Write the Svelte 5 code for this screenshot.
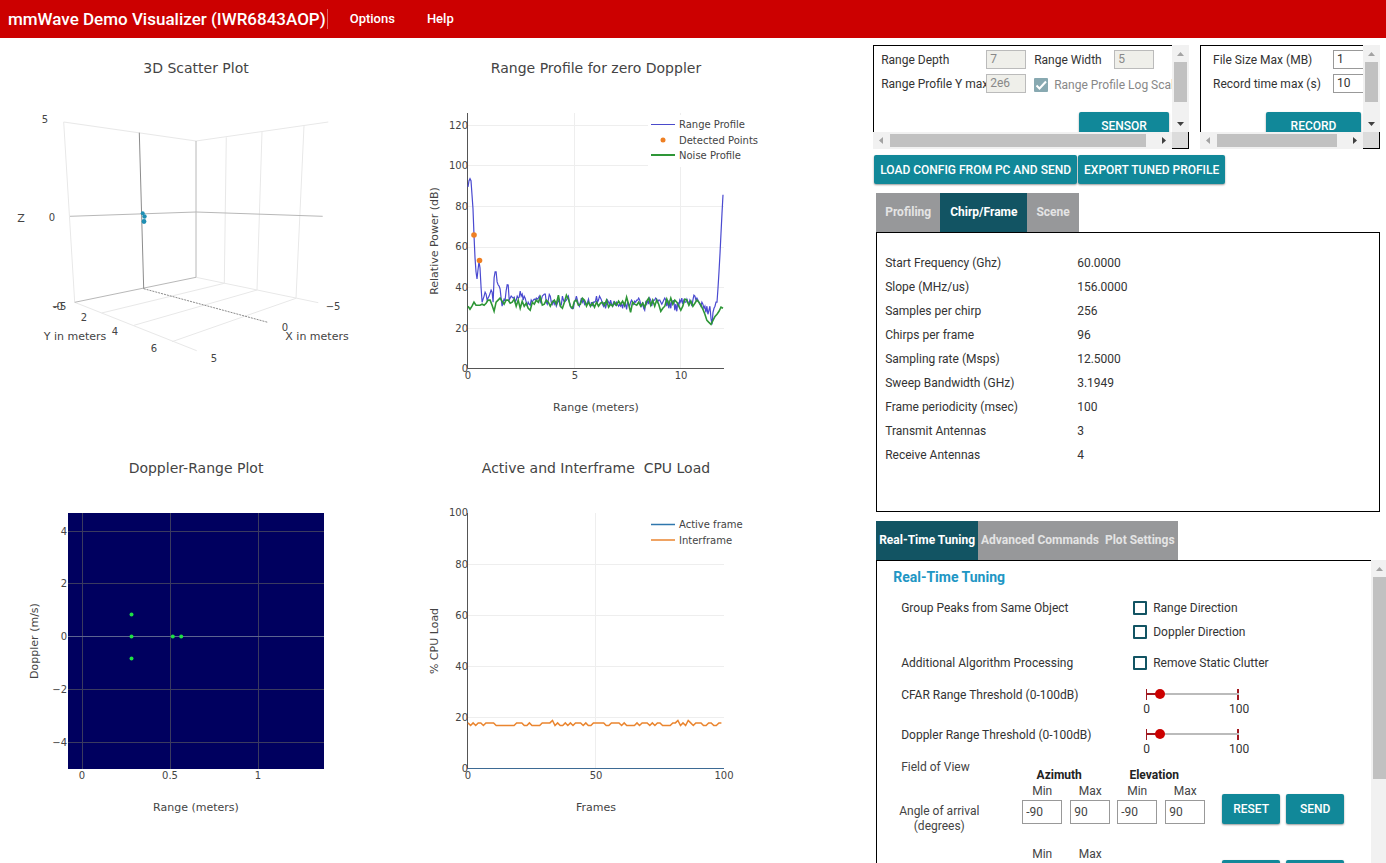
<script>
  const rangeProfile = [
    90, 93, 94, 93, 86, 79, 66, 55, 48, 44.5, 49, 53, 50, 40, 33, 34.5, 36, 38, 37, 34, 35, 36, 37.5, 39, 38, 33, 45, 48, 48, 43, 41.6, 41, 39.5, 35, 31,
    33, 34.5, 34, 38.5, 41.6, 41.5, 34, 35, 36, 35.5, 35, 35.5, 33, 34, 36, 35, 35.5, 38.5, 36, 37, 34, 36, 35, 33, 31, 33, 32, 31.5, 34, 33, 34,
    34.5, 34, 35, 34.5, 35, 36, 33, 34, 36, 36.5, 37, 37, 33, 32, 34, 36.8, 36, 33, 32, 34, 32, 33, 31, 32.5, 34, 33, 31, 32, 36, 34, 33, 33.5, 34, 35,
    36, 33, 31, 30, 30.5, 30, 33, 34, 36, 34, 32, 31, 33, 35, 33, 34, 32, 33, 31.5, 33, 34.5, 32, 31, 33, 31, 33, 33, 33.5, 36, 33, 34, 36, 35, 34,
    32, 31, 33, 30, 32, 34, 33, 32, 34, 32, 31, 33, 32, 31.5, 33, 32, 31, 32, 31, 32, 30, 33, 31, 32, 29.5, 33, 32, 31, 33, 34, 33, 32, 33.5, 33, 34,
    34, 35, 34, 32, 31, 33, 30, 29, 33, 32, 34, 32, 35, 34, 31, 33, 34, 34, 35, 34.5, 33, 34, 34, 33, 32, 33, 34, 35, 34, 31, 34, 30, 33, 30, 34, 32,
    34, 29, 32, 28.5, 33, 31, 34, 33, 35, 32, 34, 33, 33, 34.5, 33, 32, 34, 33, 31, 34, 36.5, 36, 34, 35, 34, 33, 32, 31, 33, 32, 30, 31, 28, 31,
    27, 29, 31, 25, 22, 28, 30, 31, 33, 33, 40, 48, 57, 67, 77, 86
  ];
  const noiseProfile = [
    31, 29.5, 31, 33, 31.5, 31.5, 31.5, 32, 31.5, 32.5, 34, 34, 31.5, 28.5, 33, 34, 35, 33.5, 32, 34, 34, 32.5, 33, 34.5, 31, 34, 30, 33.5, 31, 32.5,
    30, 29, 33, 32, 34, 33, 35.5, 31.5, 32, 34, 33, 31, 33, 34, 32, 36.5, 31, 30, 33, 36.5, 34.5, 31, 30, 33.5, 34, 31.5, 32, 35, 34, 31, 33, 31, 32.5,
    30.5, 33, 31, 32.5, 33, 31.5, 34, 30.5, 32, 31, 33, 31.5, 33.5, 32, 33.5, 31.5, 35.5, 32, 28, 33, 32, 31.5, 33, 31, 32.5, 30.5, 33.5, 35, 31.5,
    34, 31, 34, 32, 28.5, 30, 31, 34.5, 32, 35, 32, 34, 33, 31, 29, 31, 34.5, 34, 31.5, 33.5, 31, 32.5, 34, 33, 31.5, 29.5, 27, 24, 23, 22, 24, 26,
    27, 28.5, 30.5, 30
  ];
  const interframe = (
    '8787887888877777777888778777788889787787878887877888887788887877778788878788777788978798788877887788'
  ).split('').map((d) => 10 + Number(d));

  const left = 68;
  const base = 331;
  const trace = (values, dx, dy) =>
    values.map((v, i) => `${(left + i * dx).toFixed(1)},${(base - v * dy).toFixed(1)}`).join(' ');
  const bluePoints = trace(rangeProfile, 255 / (rangeProfile.length - 1), 2.025);
  const greenPoints = trace(noiseProfile, 255 / (noiseProfile.length - 1), 2.025);
  const cpuPoints = trace(interframe, 2.56, 2.56);

  const chirp = [
    ['Start Frequency (Ghz)', '60.0000'],
    ['Slope (MHz/us)', '156.0000'],
    ['Samples per chirp', '256'],
    ['Chirps per frame', '96'],
    ['Sampling rate (Msps)', '12.5000'],
    ['Sweep Bandwidth (GHz)', '3.1949'],
    ['Frame periodicity (msec)', '100'],
    ['Transmit Antennas', '3'],
    ['Receive Antennas', '4']
  ];
  const sliders = [
    { id: 'cfar', label: 'CFAR Range Threshold (0-100dB)', value: 15 },
    { id: 'doppler', label: 'Doppler Range Threshold (0-100dB)', value: 15 }
  ];
</script>

{#snippet arrow(points, strong)}
  <svg class="arrow" class:strong viewBox="0 0 17 17" aria-hidden="true"><polygon {points} /></svg>
{/snippet}

{#snippet vbar()}
  <div class="vbar">
    {@render arrow('5,11 12,11 8.5,7', false)}
    <div class="track"><div class="thumb"></div></div>
    {@render arrow('5,7 12,7 8.5,11', true)}
  </div>
{/snippet}

{#snippet hbar()}
  <div class="hbar">
    {@render arrow('10,5 10,12 6,8.5', false)}
    <div class="track"><div class="thumb"></div></div>
    {@render arrow('7,5 7,12 11,8.5', true)}
  </div>
  <div class="corner"></div>
{/snippet}

{#snippet angles(name)}
  <div class="pair">
    <strong>{name}</strong>
    <label for="{name}-min">Min</label>
    <label for="{name}-max">Max</label>
    <input id="{name}-min" value="-90" />
    <input id="{name}-max" value="90" />
  </div>
{/snippet}

<div class="page">
  <header>
    <h1>mmWave Demo Visualizer (IWR6843AOP)</h1>
    <nav>
      <button>Options</button>
      <button>Help</button>
    </nav>
  </header>

  <main>
    <section class="plots">
      <svg viewBox="0 0 400 400" role="img" aria-label="3D Scatter Plot">
        <text class="title" x="196" y="35">3D Scatter Plot</text>
        <g class="cube">
          <path d="M63.7 84 196 103 328.3 84M63.7 84 74.7 264.3M226.3 99.3 224.3 245.3M262 94 257 252M304 87.7 296 260.3M196 239.3 318.3 264.7M224.3 245.3 101.7 275M257 252 134 287.3M296 260.3 172 303.7M74.7 264.3 196.7 312.7" />
          <path class="mid" d="M70 178.3 196 174 322.7 178.3M196 103V239.3L74.7 264.3" />
          <path class="dark" d="M139.3 94.7 143.7 250.7" />
          <path class="dark dots" d="M143.7 250.7 267.7 284.3" />
        </g>
        <g fill="#1f8fb3">
          <circle cx="142.7" cy="175.3" r="2" />
          <circle cx="144.5" cy="178.5" r="2.2" />
          <circle cx="144" cy="183.5" r="2.4" />
        </g>
        <g class="tick">
          <text x="45" y="85">5</text>
          <text x="52" y="183">0</text>
          <text x="58" y="272">-0</text>
          <text x="59" y="272">−5</text>
          <text x="84" y="283">2</text>
          <text x="115" y="297">4</text>
          <text x="154" y="314">6</text>
          <text x="214" y="324">5</text>
          <text x="285" y="293">0</text>
          <text x="333" y="272">−5</text>
        </g>
        <g class="axis">
          <text x="21" y="184">Z</text>
          <text x="75" y="302">Y in meters</text>
          <text x="317" y="302">X in meters</text>
        </g>
      </svg>

      <svg viewBox="0 0 400 400" role="img" aria-label="Range Profile for zero Doppler">
        <text class="title" x="196" y="35">Range Profile for zero Doppler</text>
        <path class="grid" d="M174.5 75V331M280.5 75V331M68 290.5H324M68 249.5H324M68 209.5H324M68 168.5H324M68 127.5H324M68 87.5H324" />
        <rect x="248" y="77" width="112" height="52" fill="#fff" />
        <path class="frame" d="M67.5 75V330.5H324" />
        <polyline points={bluePoints} stroke="#4a4ad0" stroke-width="1.2" />
        <polyline points={greenPoints} stroke="#2e9637" stroke-width="1.6" />
        <circle cx="74" cy="197" r="2.8" fill="#ee7f23" />
        <circle cx="79.5" cy="222.5" r="2.8" fill="#ee7f23" />
        <path d="M251 86.5H275" stroke="#4a4acb" />
        <circle cx="263" cy="102" r="2.5" fill="#ee7f23" />
        <path d="M251 117H275" stroke="#2e9637" stroke-width="2" />
        <g class="legend">
          <text x="279" y="90">Range Profile</text>
          <text x="279" y="106">Detected Points</text>
          <text x="279" y="121">Noise Profile</text>
        </g>
        <g class="tick end">
          <text x="68" y="91">120</text>
          <text x="68" y="131">100</text>
          <text x="68" y="172">80</text>
          <text x="68" y="212">60</text>
          <text x="68" y="253">40</text>
          <text x="68" y="294">20</text>
          <text x="68" y="334">0</text>
        </g>
        <g class="tick">
          <text x="68" y="341">0</text>
          <text x="175" y="341">5</text>
          <text x="281" y="341">10</text>
        </g>
        <g class="axis">
          <text x="196" y="373">Range (meters)</text>
          <text transform="translate(38 203) rotate(-90)">Relative Power (dB)</text>
        </g>
      </svg>

      <svg viewBox="0 0 400 400" role="img" aria-label="Doppler-Range Plot">
        <text class="title" x="196" y="35">Doppler-Range Plot</text>
        <rect x="68" y="75" width="256" height="256" fill="#00005f" />
        <path d="M82.5 75V331M170.5 75V331M258.5 75V331M68 93.5H324M68 145.5H324M68 251.5H324M68 304.5H324" stroke="#3a3a5f" />
        <path d="M68 198.5H324" stroke="#5c6490" />
        <g fill="#1fe044">
          <circle cx="131.5" cy="176.5" r="2" />
          <circle cx="131.5" cy="198.5" r="2" />
          <circle cx="131.5" cy="220.5" r="2" />
          <circle cx="172.8" cy="198.5" r="2" />
          <circle cx="181.2" cy="198.5" r="2" />
        </g>
        <g class="tick end">
          <text x="67" y="97">4</text>
          <text x="67" y="149">2</text>
          <text x="67" y="202">0</text>
          <text x="67" y="255">−2</text>
          <text x="67" y="308">−4</text>
        </g>
        <g class="tick">
          <text x="82" y="341">0</text>
          <text x="170" y="341">0.5</text>
          <text x="258" y="341">1</text>
        </g>
        <g class="axis">
          <text x="196" y="373">Range (meters)</text>
          <text transform="translate(38 203) rotate(-90)">Doppler (m/s)</text>
        </g>
      </svg>

      <svg viewBox="0 0 400 400" role="img" aria-label="Active and Interframe CPU Load">
        <text class="title" x="196" y="35">Active and Interframe&nbsp; CPU Load</text>
        <path class="grid" d="M195.5 75V331M68 126.5H324M68 177.5H324M68 228.5H324M68 279.5H324" />
        <path class="frame" d="M67.5 75V330.5" />
        <path d="M67 330.5H324" stroke="#3d6a94" />
        <polyline points={cpuPoints} stroke="#ea852f" stroke-width="1.5" />
        <path d="M251 86.5H275" stroke="#2f77ad" stroke-width="1.5" />
        <path d="M251 102H275" stroke="#ea852f" stroke-width="1.5" />
        <g class="legend">
          <text x="279" y="90">Active frame</text>
          <text x="279" y="106">Interframe</text>
        </g>
        <g class="tick end">
          <text x="68" y="78">100</text>
          <text x="68" y="130">80</text>
          <text x="68" y="181">60</text>
          <text x="68" y="232">40</text>
          <text x="68" y="283">20</text>
          <text x="68" y="334">0</text>
        </g>
        <g class="tick">
          <text x="68" y="341">0</text>
          <text x="196" y="341">50</text>
          <text x="324" y="341">100</text>
        </g>
        <g class="axis">
          <text x="196" y="373">Frames</text>
          <text transform="translate(38 203) rotate(-90)">% CPU Load</text>
        </g>
      </svg>
    </section>

    <section class="side">
      <div class="boxes">
        <div class="scrollbox wide">
          <div class="view">
            <div class="fields">
              <label for="depth">Range Depth</label>
              <input id="depth" value="7" disabled />
              <label for="width">Range Width</label>
              <input id="width" value="5" disabled />
              <label for="ymax">Range Profile Y max</label>
              <input id="ymax" value="2e6" disabled />
              <label class="check off"><input type="checkbox" checked disabled />Range Profile Log Scale</label>
            </div>
            <button class="action">SENSOR</button>
          </div>
          {@render vbar()}
          {@render hbar()}
        </div>
        <div class="scrollbox narrow">
          <div class="view">
            <div class="fields">
              <label for="size">File Size Max (MB)</label>
              <input id="size" value="1" />
              <label for="time">Record time max (s)</label>
              <input id="time" value="10" />
            </div>
            <button class="action">RECORD</button>
          </div>
          {@render vbar()}
          {@render hbar()}
        </div>
      </div>

      <div class="buttons">
        <button class="action">LOAD CONFIG FROM PC AND SEND</button>
        <button class="action">EXPORT TUNED PROFILE</button>
      </div>

      <div class="tabs roomy" role="tablist">
        <button role="tab" aria-selected="false">Profiling</button>
        <button role="tab" aria-selected="true">Chirp/Frame</button>
        <button role="tab" aria-selected="false">Scene</button>
      </div>
      <div class="panel">
        <table>
          <tbody>
            {#each chirp as [name, value]}
              <tr><th scope="row">{name}</th><td>{value}</td></tr>
            {/each}
          </tbody>
        </table>
      </div>

      <div class="tabs" role="tablist">
        <button role="tab" aria-selected="true">Real-Time Tuning</button>
        <button role="tab" aria-selected="false">Advanced Commands</button>
        <button role="tab" aria-selected="false">Plot Settings</button>
      </div>
      <div class="tuning">
        <div class="form">
          <h2>Real-Time Tuning</h2>
          <div class="row">
            <span>Group Peaks from Same Object</span>
            <div>
              <label class="check"><input type="checkbox" />Range Direction</label>
              <label class="check"><input type="checkbox" />Doppler Direction</label>
            </div>
          </div>
          <div class="row">
            <span>Additional Algorithm Processing</span>
            <label class="check"><input type="checkbox" />Remove Static Clutter</label>
          </div>
          <div>
            {#each sliders as s}
              <div class="row slide">
                <label for={s.id}>{s.label}</label>
                <div class="slider">
                  <div class="rail"><input id={s.id} type="range" min="0" max="100" value={s.value} /></div>
                  <div class="ends"><span>0</span><span>100</span></div>
                </div>
              </div>
            {/each}
          </div>
          <div class="fov">
            <div class="names">
              <span>Field of View</span>
              <span class="angle">Angle of arrival<br />(degrees)</span>
            </div>
            {@render angles('Azimuth')}
            {@render angles('Elevation')}
            <div class="send"><button class="action">RESET</button><button class="action">SEND</button></div>
          </div>
          <div class="fov second">
            <div class="names"></div>
            <div class="pair">
              <label for="r-min">Min</label>
              <label for="r-max">Max</label>
              <input id="r-min" />
              <input id="r-max" />
            </div>
            <div class="pair"></div>
            <div class="send"><button class="action">RESET</button><button class="action">SEND</button></div>
          </div>
        </div>
        {@render vbar()}
      </div>
    </section>
  </main>
</div>

<style>
  :global(body) {
    margin: 0;
    background: #fff;
  }
  .page {
    display: flex;
    flex-direction: column;
    height: 100vh;
    overflow: hidden;
    color: #333;
    font: 12px/16px Roboto, sans-serif;
  }
  .page * {
    box-sizing: border-box;
  }
  button,
  input {
    font: inherit;
    color: inherit;
    margin: 0;
    border: 0;
    border-radius: 0;
  }
  header {
    display: flex;
    align-items: center;
    flex: none;
    height: 38px;
    padding-left: 8px;
    background: #c00;
    color: #fff;
  }
  h1 {
    margin: 0;
    padding-right: 1px;
    border-right: 1px solid #e06666;
    font-size: 17px;
    line-height: 20px;
    font-weight: 500;
    white-space: nowrap;
  }
  nav {
    display: flex;
    gap: 32px;
    padding-left: 22px;
  }
  nav button {
    padding: 0;
    background: none;
    font-size: 13px;
    font-weight: 500;
  }
  main {
    display: grid;
    grid-template-columns: 63fr 37fr;
    flex: 1;
    min-height: 0;
  }
  .plots {
    display: grid;
    grid-template-columns: repeat(2, 400px);
    align-content: start;
    min-width: 0;
  }
  .plots svg {
    display: block;
    width: 100%;
    fill: none;
    font-family: "DejaVu Sans", Verdana, sans-serif;
  }
  .plots text {
    fill: #444;
    text-anchor: middle;
  }
  .plots .title {
    font-size: 14px;
  }
  .plots .tick {
    font-size: 10px;
  }
  .plots .legend {
    font-size: 10px;
  }
  .plots .axis {
    font-size: 11px;
  }
  .plots .end text {
    text-anchor: end;
  }
  .plots .legend text {
    text-anchor: start;
  }
  .grid {
    stroke: #eee;
  }
  .frame {
    stroke: #555;
  }
  .cube path {
    stroke: #e8e8e8;
  }
  .cube .mid {
    stroke: #b8b8b8;
  }
  .cube .dark {
    stroke: #8c8c8c;
  }
  .cube .dots {
    stroke-dasharray: 2 1;
  }
  .side {
    display: flex;
    flex-direction: column;
    min-width: 0;
    min-height: 0;
    padding: 7px 6px 0 0;
  }
  .boxes {
    display: flex;
    flex: none;
    gap: 11px;
  }
  .scrollbox {
    display: grid;
    grid-template: 87px 17px / minmax(0, 1fr) 17px;
  }
  .wide {
    flex: 316 1 0;
    min-width: 0;
  }
  .narrow {
    flex: 180 1 0;
    min-width: 0;
  }
  .view {
    display: flex;
    flex-direction: column;
    overflow: hidden;
    padding: 4px 3px 0 7px;
    border: solid #000;
    border-width: 1px 0 0 1px;
  }
  .narrow .view {
    padding: 4px 2px 0 12px;
  }
  .fields {
    display: grid;
    grid-template-columns: 105px 48px 80px 40px;
    grid-auto-rows: 19px;
    row-gap: 5px;
    white-space: nowrap;
    line-height: 21px;
  }
  .narrow .fields {
    grid-template-columns: 120px 40px;
  }
  .fields > input,
  .pair input {
    width: 40px;
    padding: 0 3px;
    border: 1px solid #999;
    background: #fff;
  }
  .fields > input:disabled {
    background: #efefea;
    border-color: #bbb;
    color: #888;
  }
  .view .action {
    flex: none;
    align-self: flex-end;
    width: 90px;
    height: 28px;
    margin-top: 19px;
  }
  .narrow .action {
    width: 95px;
  }
  .action {
    padding: 0 6px;
    border-radius: 2px;
    background: #118899;
    box-shadow: 0 1px 2px #0006;
    color: #fff;
    font-weight: 500;
    white-space: nowrap;
  }
  .vbar,
  .hbar {
    display: flex;
    background: #f1f1f1;
  }
  .vbar {
    flex-direction: column;
    width: 17px;
  }
  .arrow {
    flex: none;
    width: 17px;
    height: 17px;
    fill: #a3a3a3;
  }
  .strong {
    fill: #404040;
  }
  .track {
    flex: 1;
    min-height: 0;
  }
  .thumb {
    background: #c1c1c1;
  }
  .vbar .thumb {
    height: 40px;
    margin: 0 2px;
  }
  .hbar .thumb {
    height: 13px;
    margin: 2px 9px 2px 0;
  }
  .corner {
    background: #dcdcdc;
    border: solid #000;
    border-width: 0 1px 1px 0;
  }
  .buttons {
    display: flex;
    flex: none;
    gap: 1px;
    padding: 6px 0 9px 1px;
  }
  .buttons .action {
    height: 29px;
  }
  .tabs {
    display: flex;
    flex: none;
    align-self: flex-start;
    margin-left: 3px;
    background: #999a9b;
  }
  .tabs button {
    height: 39px;
    padding: 0 3px 2px;
    background: #97989a;
    color: #e4e4e4;
    font-weight: 700;
    white-space: nowrap;
  }
  .tabs.roomy button {
    padding: 0 9px 2px;
  }
  .tabs button[aria-selected="true"] {
    background: #125463;
    color: #fff;
  }
  .tabs.roomy button[aria-selected="true"] {
    padding: 0 10px 2px;
  }
  .panel {
    flex: none;
    height: 280px;
    margin: 0 0 9px 3px;
    padding: 18px 8px;
    border: 1px solid #000;
  }
  table {
    border-spacing: 0;
  }
  th,
  td {
    height: 24px;
    padding: 0;
    text-align: left;
    font-weight: 400;
  }
  th {
    width: 192px;
  }
  .tuning {
    display: flex;
    flex: 1;
    min-height: 0;
    margin: 0 -8px -20px 3px;
  }
  .form {
    flex: 1;
    min-width: 0;
    overflow: hidden;
    padding: 8px 0 0 24px;
    border: solid #000;
    border-width: 1px 0 0 1px;
  }
  .tuning .vbar .thumb {
    height: 202px;
  }
  h2 {
    margin: 0 0 11px -8px;
    color: #2196c4;
    font-size: 14px;
    line-height: 16px;
    font-weight: 700;
  }
  .row {
    display: grid;
    grid-template-columns: 232px 1fr;
    line-height: 24px;
  }
  .row + .row {
    margin-top: 7px;
  }
  .check {
    display: flex;
    align-items: center;
    gap: 6px;
    height: 24px;
  }
  .check input {
    flex: none;
    width: 14px;
    height: 14px;
    appearance: none;
    border: 2px solid #125463;
    border-radius: 1px;
    background: #fff;
  }
  .check.off {
    grid-column: 3 / 5;
    height: 22px;
    color: #888;
  }
  .check.off input {
    border: 0;
    background: #88a9b1 url("data:image/svg+xml,%3Csvg xmlns='http://www.w3.org/2000/svg' viewBox='0 0 14 14'%3E%3Cpath d='M2.500 7.500 5.500 10.500 12 3.500' fill='none' stroke='white' stroke-width='2'/%3E%3C/svg%3E");
  }
  .row.slide,
  .row.slide + .row.slide {
    height: 40px;
    margin: 0;
    line-height: 40px;
  }
  .slider {
    width: 93px;
    margin-left: 13px;
    padding-top: 14px;
    line-height: 16px;
  }
  .rail {
    display: flex;
    height: 11px;
    border: solid #a01820;
    border-width: 0 2px 0 1px;
  }
  .rail input {
    flex: none;
    width: 103px;
    height: 10px;
    margin: 0 -6px;
    appearance: none;
    background: linear-gradient(90deg, #a01820 15%, #bbb 15%) center / 92px 2px no-repeat;
  }
  .rail input::-webkit-slider-thumb {
    appearance: none;
    width: 10px;
    height: 10px;
    border-radius: 50%;
    background: #c00;
  }
  .ends {
    display: flex;
    justify-content: space-between;
    margin: 1px -10px 0 -3px;
  }
  .fov {
    display: flex;
    padding-top: 4px;
    color: #444;
  }
  .names {
    display: flex;
    flex-direction: column;
    align-items: flex-start;
    flex: none;
    width: 121px;
  }
  .angle {
    margin: 29px 0 0 -2px;
    line-height: 15px;
    text-align: center;
  }
  .pair {
    display: grid;
    grid-template-columns: 40px 40px;
    grid-auto-rows: 16px;
    column-gap: 8px;
    width: 88px;
    margin-right: 7px;
    padding-top: 8px;
    text-align: center;
  }
  .pair strong {
    grid-column: 1 / 3;
    padding-right: 14px;
    color: #222;
    font-weight: 700;
  }
  .pair input {
    height: 24px;
    margin-top: 1px;
  }
  .send {
    display: flex;
    flex: none;
    gap: 6px;
    padding: 35px 0 0 10px;
  }
  .send .action {
    width: 58px;
    height: 30px;
  }
  .second {
    padding-top: 12px;
  }
  .second .pair {
    padding-top: 0;
  }
  .second .send {
    padding-top: 14px;
  }
</style>
